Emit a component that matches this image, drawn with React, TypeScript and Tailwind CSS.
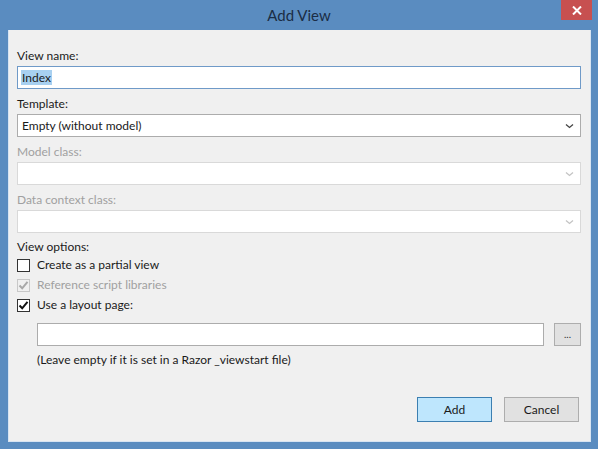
import { useState } from "react";

// small chevron used by the combo boxes
const Chevron = ({ disabled }: { disabled?: boolean }) => (
  <svg width="9" height="6" viewBox="0 0 9 6" className="shrink-0">
    <path d="M1 1.5 L4.5 4.5 L8 1.5" fill="none" stroke={disabled ? "#c4c4c4" : "#444"} strokeWidth="1.3" />
  </svg>
);

const Check = ({ color }: { color: string }) => (
  <svg width="11" height="11" viewBox="0 0 11 11">
    <path d="M1.5 5.5 L4.2 8.3 L9.5 1.8" fill="none" stroke={color} strokeWidth="2" />
  </svg>
);

const Field = ({ label, disabled, children }: { label: string; disabled?: boolean; children: React.ReactNode }) => (
  <div className="flex flex-col">
    <div className={`h-[16px] leading-[16px] ${disabled ? "text-[#a0a0a0]" : "text-[#1a1a1a]"}`}>{label}</div>
    <div className="mt-[2px]">{children}</div>
  </div>
);

const Combo = ({ value, disabled }: { value?: string; disabled?: boolean }) => (
  <div
    className={`h-[23px] bg-white border flex items-center justify-between pl-[4px] pr-[6px] ${
      disabled ? "border-[#d9d9d9]" : "border-[#acacac]"
    }`}
  >
    <span className="text-[#1a1a1a]">{value}</span>
    <Chevron disabled={disabled} />
  </div>
);

const CheckRow = ({ label, checked, disabled }: { label: string; checked?: boolean; disabled?: boolean }) => (
  <div className="h-[20px] flex items-center gap-[7px]">
    <div
      className={`w-[13px] h-[13px] border flex items-center justify-center ${
        disabled ? "border-[#c8c8c8] bg-[#f0f0f0]" : "border-[#333] bg-white"
      }`}
    >
      {checked && <Check color={disabled ? "#a8a8a8" : "#111"} />}
    </div>
    <span className={disabled ? "text-[#a0a0a0]" : "text-[#1a1a1a]"}>{label}</span>
  </div>
);

export default function App() {
  const [name] = useState("Index");

  return (
    <div className="w-[598px] h-[449px] bg-[#5a8cc0] flex flex-col text-[12px] font-['Lato','Noto_Sans',sans-serif]">
      {/* Title bar */}
      <div className="relative h-[30px] flex items-center justify-center">
        <span className="text-[15px] text-[#1b2d45] pt-[1px]">Add View</span>
        <button className="absolute right-[6px] top-0 w-[31px] h-[20px] bg-[#c75050] flex items-center justify-center">
          <svg width="10" height="9" viewBox="0 0 10 9">
            <path d="M1 0.5 L9 8.5 M9 0.5 L1 8.5" stroke="white" strokeWidth="2" />
          </svg>
        </button>
      </div>

      {/* Client area */}
      <div className="flex-1 mx-[7px] mb-[7px] ml-[8px] bg-[#f0f0f0] border border-[#d7e4f2] border-t-0 pl-[8px] pr-[9px] pt-[18px] pb-[19px] flex flex-col">
        <div className="flex flex-col gap-[7px]">
          <Field label="View name:">
            <div className="h-[23px] bg-white border border-[#6f9ac8] flex items-center pl-[3px]">
              <span className="bg-[#a8d0f0] text-[#1a1a1a] leading-[15px] px-[1px]">{name}</span>
            </div>
          </Field>
          <Field label="Template:">
            <Combo value="Empty (without model)" />
          </Field>
          <Field label="Model class:" disabled>
            <Combo disabled />
          </Field>
          <Field label="Data context class:" disabled>
            <Combo disabled />
          </Field>
        </div>

        <div className="mt-[6px] h-[16px] leading-[16px] text-[#1a1a1a]">View options:</div>
        <CheckRow label="Create as a partial view" />
        <CheckRow label="Reference script libraries" checked disabled />
        <CheckRow label="Use a layout page:" checked />

        <div className="pl-[20px] mt-[8px] flex items-center gap-[10px]">
          <div className="flex-1 h-[23px] bg-white border border-[#acacac]" />
          <button className="w-[27px] h-[23px] bg-[#e1e1e1] border border-[#adadad] text-[10px] text-[#333] leading-none pb-[2px]">
            ...
          </button>
        </div>
        <div className="pl-[20px] mt-[6px] h-[16px] leading-[16px] text-[#1a1a1a]">
          (Leave empty if it is set in a Razor _viewstart file)
        </div>

        <div className="flex-1" />
        <div className="flex justify-end gap-[12px] pr-[2px]">
          <button className="w-[75px] h-[25px] bg-[#bee6fd] border border-[#3c7fb1] text-[#1a1a1a]">Add</button>
          <button className="w-[75px] h-[25px] bg-[#e1e1e1] border border-[#adadad] text-[#1a1a1a]">Cancel</button>
        </div>
      </div>
    </div>
  );
}
